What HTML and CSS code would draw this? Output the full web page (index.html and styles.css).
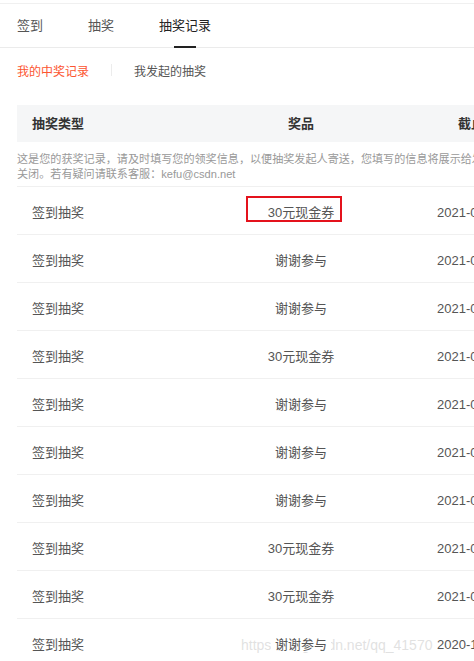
FILE: index.html
```html
<!DOCTYPE html>
<html lang="zh-CN">
<head>
<meta charset="utf-8">
<title>抽奖记录</title>
<link rel="stylesheet" href="styles.css">
</head>
<body>
<div class="page">
  <div class="topline"></div>
  <nav class="tabs">
    <span class="tab">签到</span>
    <span class="tab">抽奖</span>
    <span class="tab active">抽奖记录</span>
  </nav>
  <div class="subtabs">
    <span class="subtab on">我的中奖记录</span>
    <span class="sep"></span>
    <span class="subtab">我发起的抽奖</span>
  </div>
  <div class="table">
    <div class="thead">
      <span class="c1">抽奖类型</span>
      <span class="c2">奖品</span>
      <span class="c3 h3">截止时间</span>
    </div>
    <div class="notice">
      <span class="line">这是您的获奖记录，请及时填写您的领奖信息，以便抽奖发起人寄送，您填写的信息将展示给发起人，请谨慎填写，领奖通道将于截止时间后</span>
      <span class="line">关闭。若有疑问请联系客服：kefu@csdn.net</span>
    </div>
    <div class="row">
      <span class="c1">签到抽奖</span>
      <span class="c2 prize">30元现金券<span class="mark"></span></span>
      <span class="c3">2021-01-25 09:12:33</span>
    </div>
    <div class="row">
      <span class="c1">签到抽奖</span>
      <span class="c2">谢谢参与</span>
      <span class="c3">2021-01-24 08:45:10</span>
    </div>
    <div class="row">
      <span class="c1">签到抽奖</span>
      <span class="c2">谢谢参与</span>
      <span class="c3">2021-01-22 10:03:51</span>
    </div>
    <div class="row">
      <span class="c1">签到抽奖</span>
      <span class="c2">30元现金券</span>
      <span class="c3">2021-01-20 09:30:27</span>
    </div>
    <div class="row">
      <span class="c1">签到抽奖</span>
      <span class="c2">谢谢参与</span>
      <span class="c3">2021-01-18 11:16:02</span>
    </div>
    <div class="row">
      <span class="c1">签到抽奖</span>
      <span class="c2">谢谢参与</span>
      <span class="c3">2021-01-15 08:58:44</span>
    </div>
    <div class="row">
      <span class="c1">签到抽奖</span>
      <span class="c2">谢谢参与</span>
      <span class="c3">2021-01-12 09:41:19</span>
    </div>
    <div class="row">
      <span class="c1">签到抽奖</span>
      <span class="c2">30元现金券</span>
      <span class="c3">2021-01-08 10:22:36</span>
    </div>
    <div class="row">
      <span class="c1">签到抽奖</span>
      <span class="c2">30元现金券</span>
      <span class="c3">2021-01-04 09:07:58</span>
    </div>
    <div class="row last">
      <span class="c1">签到抽奖</span>
      <span class="c2"><span class="cover">谢谢参与</span></span>
      <span class="c3"><span class="cover">2020-12-29 08:33:15</span></span>
    </div>
  </div>
  <div class="watermark">https://blog.csdn.net/qq_41570</div>
</div>
</body>
</html>
```

FILE: styles.css
```css
html, body {
  margin: 0;
  padding: 0;
  overflow: hidden;
  background: #fff;
}
body {
  font-family: "Liberation Sans", "Noto Sans CJK SC", sans-serif;
  color: #555;
}
.page {
  position: relative;
  width: 474px;
  height: 661px;
  overflow: hidden;
}
.topline {
  height: 3px;
  border-bottom: 1px solid #f0f0f0;
}
.tabs {
  display: flex;
  gap: 45px;
  padding-left: 17px;
  height: 43px;
  border-bottom: 1px solid #ebebeb;
}
.tab {
  position: relative;
  font-size: 13px;
  line-height: 43px;
  color: #555;
}
.tab.active {
  color: #222;
}
.tab.active::after {
  content: "";
  position: absolute;
  left: 50%;
  bottom: -1px;
  width: 22px;
  height: 2px;
  margin-left: -11px;
  background: #222;
}
.subtabs {
  display: flex;
  align-items: center;
  padding-left: 17px;
  margin-top: 12px;
  height: 20px;
  font-size: 12px;
}
.subtab { color: #555; }
.subtab.on { color: #fc5531; }
.sep {
  width: 1px;
  height: 12px;
  background: #ececec;
  margin: 0 22px;
}
.table {
  margin: 25px 0 0 17px;
  width: 620px;
}
.thead {
  display: grid;
  grid-template-columns: 200px 168px 1fr;
  height: 37px;
  line-height: 37px;
  background: #f5f6f7;
  font-size: 13px;
  font-weight: 700;
  color: #333;
}
.c1 { padding-left: 15px; }
.c2 { text-align: center; }
.c3 { padding-left: 52px; white-space: nowrap; }
.c3.h3 { padding-left: 73px; }
.notice {
  display: flex;
  flex-direction: column;
  padding: 10px 0 4px;
  font-size: 11.1px;
  line-height: 15px;
  color: #999;
  border-bottom: 1px solid #f0f0f0;
}
.line { white-space: nowrap; }
.row {
  display: grid;
  grid-template-columns: 200px 168px 1fr;
  height: 47px;
  border-bottom: 1px solid #f0f0f0;
  font-size: 13px;
  line-height: 20px;
  color: #555;
}
.row > span {
  padding-top: 16px;
}
.prize {
  position: relative;
}
.mark {
  position: absolute;
  left: 29px;
  top: 9px;
  width: 92px;
  height: 22px;
  border: 2px solid #e4121c;
}
.cover {
  position: relative;
  z-index: 2;
  background: #fff;
  padding: 0 4px;
  margin: 0 -4px;
}
.watermark {
  position: absolute;
  z-index: 1;
  left: 241px;
  top: 636px;
  font-size: 14px;
  line-height: 18px;
  color: rgba(200, 200, 200, 0.55);
  white-space: nowrap;
  pointer-events: none;
}
```
